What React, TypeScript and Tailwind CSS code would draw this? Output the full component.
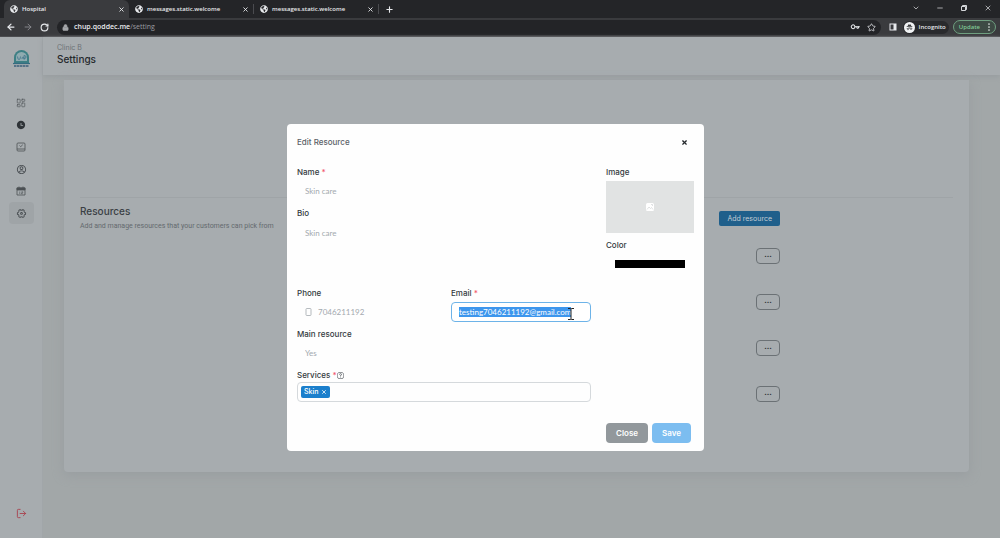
import { useEffect, useRef, useState } from 'react';
import type { ReactNode } from 'react';
import { ArrowLeft, ArrowRight, ChevronDown, Key, LayoutDashboard, Lock, Minus, Plus, RotateCw, Star, X } from 'lucide-react';
import { BsIncognito, BsQuestionCircle } from 'react-icons/bs';
import { FaGlobeAmericas } from 'react-icons/fa';
import { FiLogOut } from 'react-icons/fi';
import { RiAccountCircleLine, RiSettings4Line, RiTimeFill } from 'react-icons/ri';

const tabs = [
  { title: 'Hospital', active: true },
  { title: 'messages.static.welcome', active: false },
  { title: 'messages.static.welcome', active: false },
];

const resources = ['1', '2', '3', '4'];

function BookingIcon() {
  return (
    <svg className="w-[10px] h-[10px]" viewBox="0 0 20 20" fill="none" stroke="currentColor" strokeWidth={1.6}>
      <rect x="2" y="2" width="16" height="16" rx="2" />
      <path d="M2 14h16M7 7l2.4 2.4L13.5 5.5" />
    </svg>
  );
}

function CalendarIcon() {
  return (
    <svg className="w-[10px] h-[10px]" viewBox="0 0 20 20" fill="none" stroke="currentColor" strokeWidth={1.6}>
      <path d="M2 3.5h16V8H2z" fill="currentColor" />
      <path d="M2 4v14h16V4M6 1v3M14 1v3" />
      <path d="M7.5 11v5M11 11.5h2.5v2H11v2h2.5" strokeWidth={1.2} />
    </svg>
  );
}

function ClinicLogo() {
  return (
    <svg className="w-[19px] h-[19px]" viewBox="0 0 38 38" fill="none">
      <path d="M4 28V17a15 15 0 0 1 30 0v11z" fill="#3d7f84" />
      <path d="M8 26v-9a11 11 0 0 1 22 0v9z" fill="#8fabb0" />
      <path d="M11 15q0 6 3 6t3-6M20 20q0-4 2-4t2 4M24 21v-8q4 0 4 3t-4 4" stroke="#41748a" strokeWidth="1.6" />
      <path d="M7 25h24" stroke="#3d7f84" strokeWidth="2" />
      <path d="M2 29h34" stroke="#366c80" strokeWidth="2.4" />
      <path d="M4 34h30" stroke="#3c5f7b" strokeWidth="3" strokeDasharray="5 1" />
    </svg>
  );
}

function BrowserChrome() {
  return (
    <div className="font-['Open_Sans','Noto_Sans',sans-serif] text-[#e8eaed]">
      <div className="flex items-end h-[18px] bg-[#242528] pl-1">
        {tabs.map((tab, i) => (
          <div
            key={i}
            className={`flex items-center w-[125px] h-[18px] pl-[6px] gap-1 ${tab.active ? 'bg-[#3a3b3e] rounded-t-md pr-1' : ''}`}
          >
            <FaGlobeAmericas className="w-2 h-2 shrink-0" />
            <span className="flex-1 text-[6px] leading-[10px] font-semibold whitespace-nowrap">{tab.title}</span>
            <button aria-label="Close tab">
              <X className="w-[7px] h-[7px]" strokeWidth={3} />
            </button>
            {!tab.active && <span className="w-px h-[10px] bg-[#4a4b4f]" />}
          </div>
        ))}
        <button aria-label="New tab" className="self-center ml-[6px]">
          <Plus className="w-[9px] h-[9px]" strokeWidth={3} />
        </button>
        <div className="flex items-center self-center ml-auto gap-4 pr-2 -mt-[3px]">
          <button aria-label="Search tabs"><ChevronDown className="w-2 h-2" /></button>
          <button aria-label="Minimize"><Minus className="w-2 h-2" /></button>
          <button aria-label="Restore">
            <svg className="w-2 h-2" viewBox="0 0 16 16" fill="none" stroke="currentColor" strokeWidth={1.8}>
              <path d="M3 5h8v8H3zM5 5V3h8v8h-2" />
            </svg>
          </button>
          <button aria-label="Close window"><X className="w-2 h-2" /></button>
        </div>
      </div>

      <div className="flex items-center h-[19px] bg-[#3a3b3e] pl-[6px] pr-1 border-b border-[#4c4d50]">
        <div className="flex items-center gap-[7px]">
          <button aria-label="Back"><ArrowLeft className="w-[10px] h-[10px]" strokeWidth={3} /></button>
          <button aria-label="Forward"><ArrowRight className="w-[10px] h-[10px] text-[#919296]" /></button>
          <button aria-label="Reload"><RotateCw className="w-[9px] h-[9px]" strokeWidth={3} /></button>
        </div>
        <div className="flex flex-1 items-center h-[15px] ml-2 px-[5px] rounded-full bg-[#232427]">
          <Lock className="w-[7px] h-[7px] text-[#a5a7aa] mr-[5px]" fill="currentColor" />
          <span className="text-[7px] leading-[10px] font-semibold">
            chup.qoddec.me<span className="font-normal text-[#9b9da1]">/setting</span>
          </span>
          <div className="flex items-center gap-2 ml-auto">
            <Key className="w-2 h-2 rotate-45" strokeWidth={3} />
            <Star className="w-[9px] h-[9px]" />
          </div>
        </div>
        <button aria-label="Side panel" className="ml-2">
          <svg className="w-2 h-2" viewBox="0 0 16 16">
            <path d="M1 1h14v14H1zM3 3v10h6V3z" fill="currentColor" fillRule="evenodd" />
          </svg>
        </button>
        <div className="flex items-center h-[13px] ml-[6px] pl-px pr-[3px] gap-1 rounded-full bg-[#292a2d]">
          <span className="flex items-center justify-center w-[11px] h-[11px] rounded-full bg-[#f1f3f4] text-[#3a3b3e]">
            <BsIncognito className="w-[7px] h-[7px]" />
          </span>
          <span className="text-[6px] leading-[10px] font-semibold">Incognito</span>
        </div>
        <button className="flex items-center h-[14px] ml-1 px-[5px] gap-2 rounded-full border border-[#6f9f80] bg-[#3d4a44] text-[#81c995] text-[6px] leading-[10px] font-semibold">
          Update
          <svg className="w-[2px] h-2" viewBox="0 0 4 16" fill="#dfe5e1">
            <circle cx="2" cy="2" r="1.7" />
            <circle cx="2" cy="8" r="1.7" />
            <circle cx="2" cy="14" r="1.7" />
          </svg>
        </button>
      </div>
    </div>
  );
}

function NavItem({ label, active, children }: { label: string; active?: boolean; children: ReactNode }) {
  return (
    <a
      href="#"
      aria-label={label}
      className={`flex items-center justify-center w-[25px] h-[22px] rounded-sm ${active ? 'bg-[#9fa4a7]' : ''}`}
    >
      {children}
    </a>
  );
}

function Sidebar() {
  return (
    <nav className="flex flex-col items-center w-[43px] shrink-0 pt-3 pb-[19px] bg-[#a7acaf] text-[#4b5054] border-r border-[#a1a6a9]">
      <ClinicLogo />
      <div className="flex flex-col mt-6">
        <NavItem label="Dashboard"><LayoutDashboard className="w-[10px] h-[10px]" strokeWidth={1.5} /></NavItem>
        <NavItem label="Reports"><RiTimeFill className="w-[10px] h-[10px] text-[#2f3438]" /></NavItem>
        <NavItem label="Bookings"><BookingIcon /></NavItem>
        <NavItem label="Customers"><RiAccountCircleLine className="w-[11px] h-[11px]" /></NavItem>
        <NavItem label="Calendar"><CalendarIcon /></NavItem>
        <NavItem label="Settings" active><RiSettings4Line className="w-[11px] h-[11px]" /></NavItem>
      </div>
      <a href="#" aria-label="Log out" className="mt-auto text-[#a8434f]">
        <FiLogOut className="w-[11px] h-[11px]" />
      </a>
    </nav>
  );
}

function Label({ htmlFor, required, children }: { htmlFor: string; required?: boolean; children: ReactNode }) {
  return (
    <label htmlFor={htmlFor} className="block text-[8px] leading-3 font-medium text-[#343a40]">
      {children}
      {required && <span className="text-[#f1556c]"> *</span>}
    </label>
  );
}

function EditResourceModal() {
  const emailRef = useRef<HTMLInputElement>(null);
  const [email, setEmail] = useState('testing7046211192@gmail.com');

  useEffect(() => {
    emailRef.current?.focus();
    emailRef.current?.select();
  }, []);

  const fieldText = "font-['Lato','Liberation_Sans',sans-serif] text-[8px] leading-3";
  const plainInput = `${fieldText} block w-full h-5 px-2 bg-transparent text-[#a3a9ae] outline-none`;

  return (
    <div role="dialog" aria-label="Edit Resource" className="w-full max-w-[417px] rounded-sm bg-[#fefefe] px-[10px] pb-2">
      <div className="flex items-center justify-between h-9 pr-[6px]">
        <h2 className="text-[8px] leading-3 font-medium text-[#5b6167]">Edit Resource</h2>
        <button aria-label="Close dialog">
          <X className="w-[7px] h-[7px] text-[#23272b]" strokeWidth={4} />
        </button>
      </div>

      <form className="flex gap-[15px] pt-[6px]">
        <div className="flex flex-1 flex-col gap-[6px]">
          <div>
            <Label htmlFor="name" required>Name</Label>
            <input id="name" defaultValue="Skin care" className={`${plainInput} mt-[3px]`} />
          </div>
          <div>
            <Label htmlFor="bio">Bio</Label>
            <textarea
              id="bio"
              defaultValue="Skin care"
              className={`${fieldText} block w-full h-[59px] mt-[3px] px-2 pt-[5px] resize-none bg-transparent text-[#a3a9ae] outline-none`}
            />
          </div>
          <div className="grid grid-cols-2 gap-[14px]">
            <div>
              <Label htmlFor="phone">Phone</Label>
              <div className="flex items-center mt-[3px] pl-2">
                <svg className="w-[7px] h-2 text-[#a3a9ae] shrink-0" viewBox="0 0 14 16" fill="none" stroke="currentColor" strokeWidth={1.6}>
                  <rect x="2" y="1" width="10" height="14" rx="1.5" />
                </svg>
                <input id="phone" type="tel" defaultValue="7046211192" className={`${fieldText} block w-full h-5 px-[6px] bg-transparent text-[#a3a9ae] outline-none`} />
              </div>
            </div>
            <div>
              <Label htmlFor="email" required>Email</Label>
              <input
                id="email"
                ref={emailRef}
                value={email}
                onChange={(e) => setEmail(e.target.value)}
                className={`${fieldText} block w-full h-5 mt-[3px] px-[7px] rounded-sm border border-[#6db3e8] bg-white text-[#4b5157] outline-none selection:bg-[#3390ec]/95 selection:text-white`}
              />
            </div>
          </div>
          <div>
            <Label htmlFor="main">Main resource</Label>
            <select id="main" disabled className={`${plainInput} mt-[3px] appearance-none opacity-100`}>
              <option>Yes</option>
            </select>
          </div>
          <div>
            <div className="flex items-center">
              <Label htmlFor="services" required>Services</Label>
              <BsQuestionCircle className="w-[7px] h-[7px] text-[#343a40]" />
            </div>
            <div className="flex items-start h-5 mt-px p-[3px] gap-1 rounded-sm border border-[#d5d9dc]">
              <span className="flex items-center h-3 px-[3px] gap-[3px] rounded-xs bg-[#1b7fcc] text-white text-[7px] leading-3 font-medium">
                Skin
                <button type="button" aria-label="Remove Skin">
                  <X className="w-[6px] h-[6px]" strokeWidth={3} />
                </button>
              </span>
              <input id="services" className="flex-1 min-w-0 h-3 bg-transparent text-[8px] outline-none" />
            </div>
          </div>
        </div>

        <div className="w-[88px] shrink-0">
          <Label htmlFor="image">Image</Label>
          <button id="image" type="button" className="flex items-center justify-center w-full h-[52px] mt-[3px] bg-[#e1e3e3]">
            <svg className="w-2 h-2" viewBox="0 0 16 16">
              <rect width="16" height="16" rx="3" fill="#fff" />
              <path d="M2 13l4-5 3 3 2-2 3 4M10 3h3v3" fill="none" stroke="#d3d6d7" strokeWidth="1.4" />
            </svg>
          </button>
          <div className="mt-[6px]">
            <Label htmlFor="color">Color</Label>
            <div className="px-[9px] pt-[9px]">
              <input
                id="color"
                type="color"
                defaultValue="#000000"
                className="block w-full h-2 p-0 border-0 bg-black [&::-webkit-color-swatch]:border-0 [&::-webkit-color-swatch-wrapper]:p-0"
              />
            </div>
          </div>
        </div>
      </form>

      <div className="flex justify-end gap-1 mt-[21px] pr-[3px]">
        <button className="h-5 px-[10px] rounded-sm bg-[#92989c] text-white text-[8px] leading-3 font-semibold">Close</button>
        <button className="h-5 px-[10px] rounded-sm bg-[#7cbdf0] text-white text-[8px] leading-3 font-semibold">Save</button>
      </div>
    </div>
  );
}

export default function App() {
  return (
    <div className="relative flex flex-col min-h-screen bg-[#a2a7a8] font-['Inter','Liberation_Sans',sans-serif]">
      <BrowserChrome />
      <div className="flex flex-1">
        <Sidebar />
        <div className="flex-1 min-w-0">
          <header className="h-[38px] px-[14px] pt-[6px] bg-[#a7acaf] shadow-[0_2px_5px_#989da0]">
            <p className="text-[7px] leading-[10px] text-[#6c7276]">Clinic B</p>
            <h1 className="text-[10px] leading-3 font-medium text-[#25292d]">Settings</h1>
          </header>

          <main className="pl-[21px] pr-[31px] pt-[5px]">
            <section className="px-4 pt-[117px] pb-[70px] rounded-b-sm bg-[#a7acaf] shadow-[0_3px_12px_#989da0]">
              <div className="flex border-t border-[#9fa4a7] pt-[7px] pr-[173px]">
                <div className="flex-1">
                  <h2 className="text-[10px] leading-3 font-medium text-[#3a3f44]">Resources</h2>
                  <p className="mt-1 font-['Roboto','Liberation_Sans',sans-serif] text-[7px] leading-[10px] text-[#646a6e]">
                    Add and manage resources that your customers can pick from
                  </p>
                </div>
                <div className="flex flex-col items-end pt-[6px]">
                  <button className="h-[15px] px-2 rounded-xs bg-[#1f5f8b] text-[#c3cdd4] text-[7px] leading-[10px]">Add resource</button>
                  <div className="flex flex-col gap-[30px] mt-[22px]">
                    {resources.map((id) => (
                      <button
                        key={id}
                        aria-label="Resource actions"
                        className="flex items-center justify-center w-6 h-4 rounded-sm border border-[#6b7175] text-[#2f3438] text-[8px] leading-3 font-semibold"
                      >
                        ···
                      </button>
                    ))}
                  </div>
                </div>
              </div>
            </section>
          </main>
        </div>
      </div>

      {/* Modal layer */}
      <div className="absolute inset-x-0 top-[124px] flex justify-center pr-[9px]">
        <EditResourceModal />
        <svg className="absolute top-[184px] left-1/2 ml-[67px] w-2 h-3" viewBox="0 0 8 12" fill="none" stroke="#222" strokeWidth={1}>
          <path d="M1 .5h2.5l.5.5.5-.5H7M4 1v10M1 11.5h2.5l.5-.5.5.5H7" />
        </svg>
      </div>
    </div>
  );
}
